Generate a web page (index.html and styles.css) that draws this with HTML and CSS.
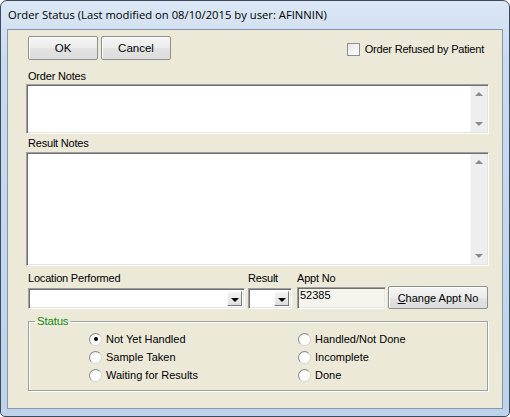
FILE: index.html
```html
<!DOCTYPE html>
<html>
<head>
  <title>Order Status</title>
  <link rel="stylesheet" href="styles.css">
</head>
<body>

<div class="window">
  <div class="titlebar">Order Status (Last modified on 08/10/2015 by user: AFINNIN)</div>
  <div class="client">

    <div class="top-row">
      <button class="btn btn-main">OK</button>
      <button class="btn btn-main">Cancel</button>
      <label class="check"><span class="checkbox"></span>Order Refused by Patient</label>
    </div>

    <div class="field-label first">Order Notes</div>
    <div class="memo memo-order">
      <div class="vscroll"><span class="arr up"></span><span class="arr down"></span></div>
    </div>

    <div class="field-label second">Result Notes</div>
    <div class="memo memo-result">
      <div class="vscroll"><span class="arr up"></span><span class="arr down"></span></div>
    </div>

    <div class="bottom-row">
      <div class="col col-loc">
        <div class="field-label">Location Performed</div>
        <div class="combo"><span class="drop"></span></div>
      </div>
      <div class="col col-result">
        <div class="field-label">Result</div>
        <div class="combo"><span class="drop"></span></div>
      </div>
      <div class="col col-appt">
        <div class="field-label">Appt No</div>
        <div class="readonly">52385</div>
      </div>
      <button class="btn btn-appt"><u>C</u>hange Appt No</button>
    </div>

    <fieldset class="status">
      <legend>Status</legend>
      <div class="radio-grid">
        <div class="opt"><span class="radio checked"></span>Not Yet Handled</div>
        <div class="opt"><span class="radio"></span>Handled/Not Done</div>
        <div class="opt"><span class="radio"></span>Sample Taken</div>
        <div class="opt"><span class="radio"></span>Incomplete</div>
        <div class="opt"><span class="radio"></span>Waiting for Results</div>
        <div class="opt"><span class="radio"></span>Done</div>
      </div>
    </fieldset>

  </div>
</div>

</body>
</html>
```

FILE: styles.css
```css
body { margin: 0; background: #fff; font-family: "Liberation Sans", Arial, sans-serif; font-size: 11px; color: #000; }

.window {
  width: 510px; height: 417px; box-sizing: border-box;
  border: 1px solid #3d4b5c; border-radius: 7px 7px 5px 5px;
  background: linear-gradient(#dbe7f5, #c9dbef 60px, #bed3ea);
  padding: 0 6px 7px 6px;
}
.titlebar { height: 28px; line-height: 28px; padding-left: 1px; font-family: "Open Sans", sans-serif; font-size: 11.25px; }

.client {
  height: 380px; box-sizing: border-box;
  border: 1px solid #8697ab; background: #ece9d8;
  padding: 6px 13px 0 20px;
  letter-spacing: -0.2px;
}

.btn {
  font: inherit; letter-spacing: 0; color: #000; padding: 0;
  border: 1px solid #8e8f8f; border-radius: 2px;
  background: linear-gradient(#f4f4f4, #ececec 50%, #e3e3e3 51%, #dcdcdc);
  box-shadow: inset 1px 1px #fff;
}

.top-row { display: flex; align-items: center; height: 24px; }
.btn-main { width: 70px; height: 24px; margin-right: 3px; font-size: 11.5px; }
.check { margin-left: auto; margin-right: 5px; display: flex; align-items: center; gap: 5px; margin-top: 2px; }
.checkbox { width: 11px; height: 11px; border: 1px solid #8f8f8f; background: linear-gradient(135deg, #e6e6e6, #fff); }

.field-label { line-height: 13px; height: 13px; white-space: nowrap; }
.field-label.first { margin-top: 10px; }
.field-label.second { margin-top: 3px; }

.memo {
  box-sizing: border-box; margin-left: -2px; background: #fff;
  border: 1px solid; border-color: #a0a0a0 #fff #fff #a0a0a0;
  box-shadow: inset 1px 1px #6f6f6f, inset -1px -1px #e3e3e3;
  padding: 1px;
  display: flex; justify-content: flex-end;
}
.memo-order { height: 50px; margin-top: 1px; }
.memo-result { height: 114px; margin-top: 2px; }

.vscroll {
  width: 16px; background: #eeeeee; border-left: 1px solid #f6f6f6;
  display: flex; flex-direction: column; justify-content: space-between;
}
.arr { height: 17px; position: relative; }
.arr::after { content: ""; position: absolute; left: 4px; border-left: 4px solid transparent; border-right: 4px solid transparent; }
.arr.up::after { top: 6px; border-bottom: 4px solid #8a8a8a; }
.arr.down::after { top: 7px; border-top: 4px solid #8a8a8a; }

.bottom-row { display: flex; align-items: flex-end; margin-top: 6px; }
.col { display: flex; flex-direction: column; }
.col-loc { width: 217px; margin-right: 3px; }
.col-result { width: 44px; margin-right: 5px; }
.col-appt { width: 89px; margin-right: 2px; }

.combo {
  height: 21px; box-sizing: border-box; margin-top: 3px; background: #fff;
  border: 1px solid; border-color: #a0a0a0 #fff #fff #a0a0a0;
  box-shadow: inset 1px 1px #6f6f6f, inset -1px -1px #e3e3e3;
  display: flex; justify-content: flex-end; padding: 2px;
}
.drop {
  width: 15px; box-sizing: border-box; position: relative;
  border: 1px solid; border-color: #fff #7a7a7a #7a7a7a #fff;
  background: linear-gradient(#f4f4f4, #dedede);
}
.drop::after { content: ""; position: absolute; left: 3px; top: 6px; border-left: 4px solid transparent; border-right: 4px solid transparent; border-top: 4px solid #000; }

.readonly {
  height: 22px; box-sizing: border-box; margin-top: 2px; background: #f6f4ec;
  border: 1px solid; border-color: #a0a0a0 #fff #fff #a0a0a0;
  box-shadow: inset 1px 1px #6f6f6f, inset -1px -1px #e3e3e3;
  padding: 1px 0 0 2px; line-height: 13px; letter-spacing: 0;
}
.btn-appt { width: 100px; height: 23px; }

.status {
  margin: 6px 0 0 0; padding: 2px 0 0 0; width: 460px; height: 76px; box-sizing: border-box;
  border: 1px solid #a0a0a0; box-shadow: inset 1px 1px #fff, 1px 1px #fff;
}
.status legend { color: #108a10; margin-left: 6px; padding: 0 2px; line-height: 13px; font-size: 11.5px; }
.radio-grid { display: grid; grid-template-columns: 209px 1fr; grid-auto-rows: 18px; padding-left: 60px; }
.opt { display: flex; align-items: center; gap: 4px; letter-spacing: 0; }
.radio {
  width: 13px; height: 13px; box-sizing: border-box; border-radius: 50%; position: relative;
  border: 1px solid; border-color: #8c8c8c #d4d4d4 #d4d4d4 #8c8c8c;
  background: radial-gradient(circle at 60% 60%, #fff 45%, #e6e6e6);
}
.radio.checked::after { content: ""; position: absolute; left: 3.5px; top: 3.5px; width: 4px; height: 4px; border-radius: 50%; background: #000; }
```
